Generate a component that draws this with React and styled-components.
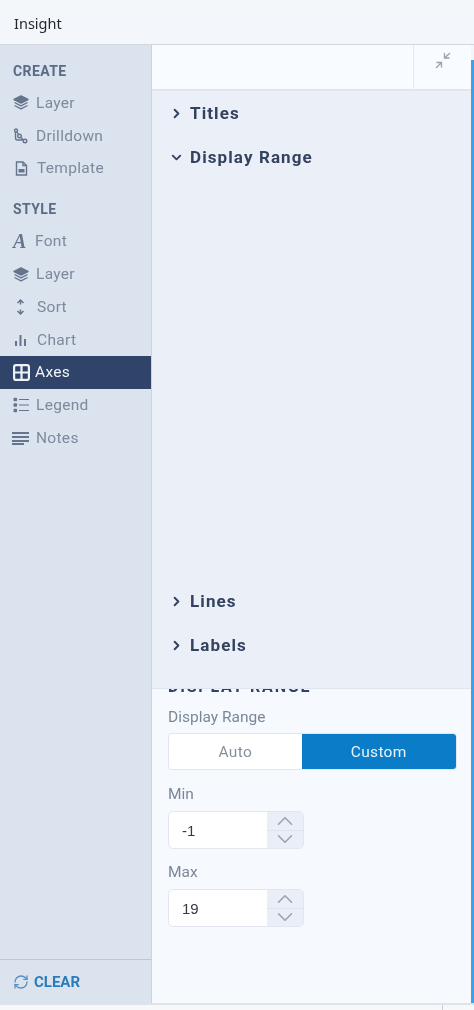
import React from "react";
import styled, { createGlobalStyle } from "styled-components";
import { ChevronDown, ChevronRight, ChevronUp, RefreshCw } from "lucide-react";

const GlobalStyle = createGlobalStyle`
	html, body {
		margin: 0;
		padding: 0;
		background: #f4f5f7;
	}
	* {
		box-sizing: border-box;
	}
`;

const Page = styled.div`
	width: 474px;
	height: 1010px;
	display: flex;
	flex-direction: column;
	overflow: hidden;
	font-family: Roboto, "Liberation Sans", sans-serif;
	filter: blur(0.4px);
`;

const TitleBar = styled.div`
	height: 43px;
	margin-top: 2px;
	padding-left: 14px;
	display: flex;
	align-items: center;
	background: #f3f6fb;
	border-bottom: 1px solid #d3d8df;
	font-family: "Noto Sans", sans-serif;
	font-size: 14.5px;
	color: #1f2630;
`;

const Body = styled.div`
	height: 958px;
	display: flex;
`;

const Sidebar = styled.div`
	width: 152px;
	display: flex;
	flex-direction: column;
	background: #dbe3ef;
	border-right: 1px solid #cbd3e0;
`;

const SideNav = styled.div`
	flex: 1;
	padding-top: 10.5px;
`;

const SectionLabel = styled.div`
	height: 31px;
	padding-left: 13px;
	margin-top: ${(props) => props.$gap || 0}px;
	display: flex;
	align-items: center;
	font-size: 14px;
	font-weight: 700;
	letter-spacing: 0.4px;
	color: #5b6b85;
`;

const NavItem = styled.div`
	height: 32.8px;
	padding-left: ${(props) => props.$indent || 13}px;
	display: flex;
	align-items: center;
	gap: ${(props) => props.$gap || 7}px;
	font-size: 15.5px;
	letter-spacing: 0.3px;
	color: ${(props) => (props.$active ? "#f2f5fa" : "#7d899c")};
	background: ${(props) => (props.$active ? "#2f4468" : "transparent")};
	svg {
		flex: none;
	}
`;

const FontGlyph = styled.span`
	width: 16px;
	font-family: "Liberation Serif", serif;
	font-style: italic;
	font-weight: 700;
	font-size: 20px;
	color: #66758d;
`;

const ClearBar = styled.div`
	height: 44px;
	padding-left: 13px;
	display: flex;
	align-items: center;
	gap: 5px;
	border-top: 1px solid #bcc7de;
	font-size: 15px;
	font-weight: 700;
	color: #2a7dbd;
`;

const Main = styled.div`
	width: 319px;
	display: flex;
	flex-direction: column;
	background: #f6f9fe;
`;

const Toolbar = styled.div`
	height: 46px;
	display: flex;
	justify-content: flex-end;
	background: #f8fbff;
	border-bottom: 2px solid #e1e6ee;
`;

const CollapseButton = styled.div`
	width: 58px;
	padding-bottom: 13px;
	display: flex;
	justify-content: center;
	align-items: center;
	border-left: 1px solid #e3e7ee;
`;

const Accordion = styled.div`
	height: 598px;
	display: flex;
	flex-direction: column;
	background: #eaeff8;
	border-bottom: 1px solid #dfe5ee;
`;

const AccordionRow = styled.div`
	height: 44px;
	padding-left: 17px;
	display: flex;
	align-items: center;
	gap: 6px;
	font-size: 17px;
	font-weight: 700;
	letter-spacing: 1.1px;
	color: #33435f;
`;

const AccordionSpace = styled.div`
	height: 400px;
`;

const Panel = styled.div`
	flex: 1;
	padding: 0 17px 0 16px;
	overflow: hidden;
`;

const ClippedHeading = styled.div`
	margin-top: -12px;
	height: 17px;
	font-size: 16px;
	font-weight: 700;
	letter-spacing: 1.8px;
	white-space: nowrap;
	color: #33435f;
`;

const FieldLabel = styled.div`
	margin-top: ${(props) => props.$top}px;
	height: 22px;
	display: flex;
	align-items: center;
	font-size: 15.5px;
	color: #7b8799;
`;

const Segmented = styled.div`
	width: 289px;
	height: 37px;
	margin-top: 5px;
	display: flex;
	border: 1px solid #e2e7ef;
	border-radius: 4px;
	overflow: hidden;
	background: #ffffff;
`;

const Segment = styled.div`
	width: ${(props) => (props.$active ? 155 : 133)}px;
	display: flex;
	align-items: center;
	justify-content: center;
	font-size: 15.5px;
	letter-spacing: 0.3px;
	color: ${(props) => (props.$active ? "#eaf4fb" : "#858f9e")};
	background: ${(props) => (props.$active ? "#0a7cc8" : "transparent")};
`;

const Stepper = styled.div`
	width: 136px;
	height: 38px;
	margin-top: 6px;
	display: flex;
	border: 1px solid #e2e7ef;
	border-radius: 5px;
	overflow: hidden;
	background: #ffffff;
`;

const StepperValue = styled.div`
	flex: 1;
	padding-left: 13px;
	display: flex;
	align-items: center;
	font-family: "Liberation Sans", sans-serif;
	font-size: 15px;
	color: #333a45;
`;

const StepperButtons = styled.div`
	width: 36px;
	display: flex;
	flex-direction: column;
	background: #e9eef7;
`;

const StepperButton = styled.div`
	flex: 1;
	display: flex;
	align-items: center;
	justify-content: center;
	overflow: hidden;
	svg {
		flex: none;
	}
	& + & {
		border-top: 1px solid #dde3ec;
	}
`;

const Stripe = styled.div`
	width: 3px;
	margin-top: 15px;
	background: #3ba2ea;
`;

const Footer = styled.div`
	flex: 1;
	background: #f7f8fa;
	border-top: 2px solid #dfe2e6;
`;

const FooterTick = styled.div`
	width: 1px;
	height: 5px;
	margin-left: 442px;
	background: #c9ced6;
`;

const LayerIcon = () => (
	<svg width="16" height="15" viewBox="0 0 16 15" fill="none" stroke="#66758d" strokeWidth="1.4" strokeLinejoin="round">
		<path d="M8 1L15 4.500 8 8 1 4.500Z" fill="#66758d" />
		<path d="M1.500 7.500L8 10.800 14.500 7.500M1.500 10.500L8 13.800 14.500 10.500" />
	</svg>
);

const DrilldownIcon = () => (
	<svg width="15" height="16" viewBox="0 0 15 16" fill="none" stroke="#66758d" strokeWidth="1.4">
		<circle cx="3" cy="2.500" r="1.500" />
		<circle cx="6.500" cy="8" r="1.800" />
		<circle cx="12" cy="13" r="1.800" />
		<path d="M4 4L5.500 6.500M8 9.500L10.500 12M2.500 4v6a2 2 0 0 0 2 2h5" />
	</svg>
);

const TemplateIcon = () => (
	<svg width="13" height="15" viewBox="0 0 13 15" fill="none" stroke="#66758d" strokeWidth="1.4">
		<path d="M1.500 1h6.500l3.500 3.500v9.500h-10z" />
		<path d="M8 1v3.500h3.500" />
		<path d="M3.500 8h6v3.500h-6z" fill="#66758d" stroke="none" />
	</svg>
);

const SortIcon = () => (
	<svg width="15" height="18" viewBox="0 0 15 18" fill="none" stroke="#66758d" strokeWidth="1.500">
		<path d="M7.500 2.500v4M4.500 5l3-3 3 3M7.500 11.500v4M4.500 13l3 3 3-3" />
	</svg>
);

const ChartIcon = () => (
	<svg width="15" height="14" viewBox="0 0 15 14" fill="#66758d">
		<rect x="2" y="8" width="2" height="5" />
		<rect x="6.500" y="2" width="2" height="11" />
		<rect x="11" y="6" width="2" height="7" />
	</svg>
);

const AxesIcon = () => (
	<svg width="17" height="17" viewBox="0 0 17 17" fill="none" stroke="#eef2f8" strokeWidth="2.200">
		<rect x="1.100" y="1.100" width="14.800" height="14.800" rx="2" />
		<path d="M8.500 1v15M1 8.500h15" />
	</svg>
);

const LegendIcon = () => (
	<svg width="16" height="16" viewBox="0 0 16 16" fill="none" stroke="#66758d" strokeWidth="1.200">
		<path d="M6 2.500h10M6 8h10M6 13.500h10" />
		<g fill="#66758d" stroke="none">
			<rect x="0.500" y="0.800" width="3.600" height="3.400" rx="1" />
			<rect x="0.500" y="6.300" width="3.600" height="3.400" rx="1" />
			<rect x="0.500" y="11.800" width="3.600" height="3.400" rx="1" />
		</g>
	</svg>
);

const NotesIcon = () => (
	<svg width="18" height="14" viewBox="0 0 18 14" fill="none" stroke="#66758d" strokeWidth="1.800">
		<path d="M0 2h17M0 6h17M0 10h17M0 13h12" />
	</svg>
);

const CollapseIcon = () => (
	<svg width="16" height="17" viewBox="0 0 16 17" fill="none" stroke="#98a2b0" strokeWidth="1.300">
		<path d="M1 16l5-5M1.500 10.500h5v5M15 1l-5 4.500M9.500 1v5h5" />
	</svg>
);

const stepperArrows = (
	<StepperButtons>
		<StepperButton>
			<ChevronUp size={26} color="#98a2b0" strokeWidth={1.4} />
		</StepperButton>
		<StepperButton>
			<ChevronDown size={26} color="#98a2b0" strokeWidth={1.4} />
		</StepperButton>
	</StepperButtons>
);

const App = () => {
	return (
		<Page>
			<GlobalStyle />
			<TitleBar>Insight</TitleBar>
			<Body>
				<Sidebar>
					<SideNav>
						<SectionLabel>CREATE</SectionLabel>
						<NavItem>
							<LayerIcon />
							Layer
						</NavItem>
						<NavItem $gap={8}>
							<DrilldownIcon />
							Drilldown
						</NavItem>
						<NavItem $indent={15} $gap={9}>
							<TemplateIcon />
							Template
						</NavItem>
						<SectionLabel $gap={9}>STYLE</SectionLabel>
						<NavItem $gap={6}>
							<FontGlyph>A</FontGlyph>
							Font
						</NavItem>
						<NavItem>
							<LayerIcon />
							Layer
						</NavItem>
						<NavItem $gap={9}>
							<SortIcon />
							Sort
						</NavItem>
						<NavItem $gap={9}>
							<ChartIcon />
							Chart
						</NavItem>
						<NavItem $active $gap={5}>
							<AxesIcon />
							Axes
						</NavItem>
						<NavItem $gap={7}>
							<LegendIcon />
							Legend
						</NavItem>
						<NavItem $indent={12} $gap={6}>
							<NotesIcon />
							Notes
						</NavItem>
					</SideNav>
					<ClearBar>
						<RefreshCw size={16} color="#5b8fc0" strokeWidth={2} />
						CLEAR
					</ClearBar>
				</Sidebar>
				<Main>
					<Toolbar>
						<CollapseButton>
							<CollapseIcon />
						</CollapseButton>
					</Toolbar>
					<Accordion>
						<AccordionRow>
							<ChevronRight size={15} color="#33435f" strokeWidth={3} />
							Titles
						</AccordionRow>
						<AccordionRow>
							<ChevronDown size={15} color="#33435f" strokeWidth={3} />
							Display Range
						</AccordionRow>
						<AccordionSpace />
						<AccordionRow>
							<ChevronRight size={15} color="#33435f" strokeWidth={3} />
							Lines
						</AccordionRow>
						<AccordionRow>
							<ChevronRight size={15} color="#33435f" strokeWidth={3} />
							Labels
						</AccordionRow>
					</Accordion>
					<Panel>
						<ClippedHeading>DISPLAY RANGE</ClippedHeading>
						<FieldLabel $top={12}>Display Range</FieldLabel>
						<Segmented>
							<Segment>Auto</Segment>
							<Segment $active>Custom</Segment>
						</Segmented>
						<FieldLabel $top={13}>Min</FieldLabel>
						<Stepper>
							<StepperValue>-1</StepperValue>
							{stepperArrows}
						</Stepper>
						<FieldLabel $top={12}>Max</FieldLabel>
						<Stepper>
							<StepperValue>19</StepperValue>
							{stepperArrows}
						</Stepper>
					</Panel>
				</Main>
				<Stripe />
			</Body>
			<Footer>
				<FooterTick />
			</Footer>
		</Page>
	);
};

export default App;
